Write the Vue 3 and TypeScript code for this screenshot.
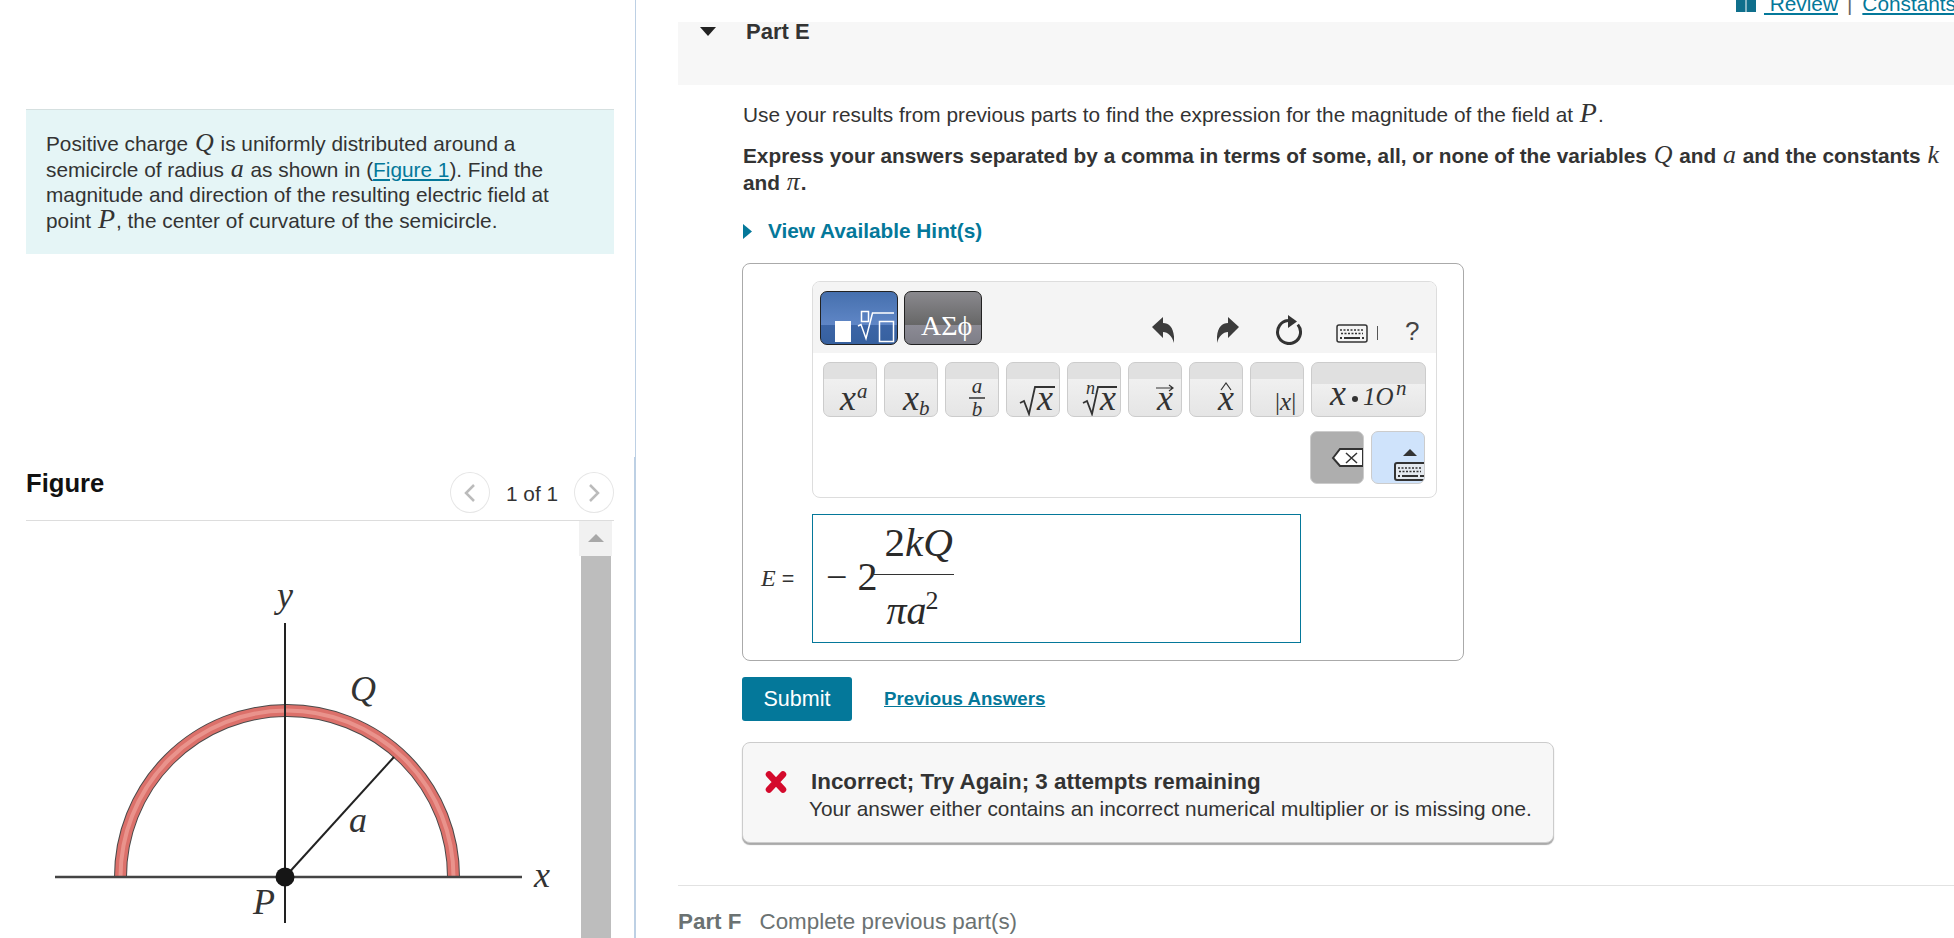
<template>
  <div class="page">
    <aside class="left">
      <span class="splitter"></span>
      <div class="intro">
        Positive charge <i class="m">Q</i> is uniformly distributed around a
        semicircle of radius <i class="m">a</i> as shown in (<a class="link">Figure 1</a>). Find the
        magnitude and direction of the resulting electric field at
        point <i class="m big">P</i>, the center of curvature of the semicircle.
      </div>

      <div class="fig-head">
        <h2>Figure</h2>
        <span class="circle">
          <svg width="12" height="20" viewBox="0 0 12 20"><path d="M10 2 2 10l8 8" /></svg>
        </span>
        <span class="count">1 of 1</span>
        <span class="circle">
          <svg width="12" height="20" viewBox="0 0 12 20"><path d="M2 2l8 8-8 8" /></svg>
        </span>
      </div>

      <div class="fig-body">
        <svg class="diagram" viewBox="26 521 554 417" width="554" height="417">
          <path class="arc a1" d="M120.500 877a166.500 166.500 0 0 1 333 0" />
          <path class="arc a2" d="M120.500 877a166.500 166.500 0 0 1 333 0" />
          <path class="arc a3" d="M120.500 877a166.500 166.500 0 0 1 333 0" />
          <line x1="55" y1="877" x2="522" y2="877" stroke="#444" stroke-width="2.500" />
          <line x1="285" y1="623" x2="285" y2="923" stroke="#222" stroke-width="2" />
          <line x1="285" y1="877" x2="394" y2="757" stroke="#222" stroke-width="2" />
          <circle cx="285" cy="877" r="9.500" fill="#161616" />
          <text x="285" y="607" text-anchor="middle">y</text>
          <text x="363" y="701" text-anchor="middle">Q</text>
          <text x="358" y="832" text-anchor="middle">a</text>
          <text x="542" y="887" text-anchor="middle">x</text>
          <text x="264" y="914" text-anchor="middle">P</text>
        </svg>
        <div class="scroll">
          <div class="scroll-up"><span class="up-tri"></span></div>
          <div class="scroll-thumb"></div>
        </div>
      </div>
    </aside>

    <main class="right">
      <div class="top-links">
        <div class="top-inner">
          <svg class="book" width="20" height="12" viewBox="0 0 20 12">
            <rect width="9.500" height="12" fill="#0f6f8c" />
            <rect x="10.500" width="9.500" height="12" fill="#0f6f8c" />
          </svg>
          <a class="link review">&nbsp;Review</a>
          <span class="sep">|</span>
          <a class="link">Constants</a>
        </div>
      </div>

      <header class="part-head">
        <svg width="16" height="9" viewBox="0 0 16 9"><path d="M0 0h16L8 9z" fill="#222" /></svg>
        <span>Part E</span>
      </header>

      <section class="part-body">
        <p class="q1">Use your results from previous parts to find the expression for the magnitude of the field at <i class="m big">P</i>.</p>
        <p class="q2">
          Express your answers separated by a comma in terms of some, all, or none of the variables
          <i class="m">Q</i> and <i class="m">a</i> and the constants <i class="m">k</i> and <i class="m">π</i>.
        </p>
        <div class="hint">
          <svg width="9" height="15" viewBox="0 0 9 15"><path d="M0 0l9 7.500L0 15z" fill="#04789a" /></svg>
          <a>View Available Hint(s)</a>
        </div>

        <div class="answer">
          <div class="editor">
            <div class="tool-head">
              <div class="tab tab-blue">
                <svg width="78" height="54" viewBox="0 0 78 54" fill="none" stroke="#fff" stroke-width="1.500">
                  <rect x="15" y="30" width="16" height="21" fill="#fff" stroke="none" />
                  <rect x="41.500" y="20.500" width="7" height="10" />
                  <path d="M38 35l3-1.500 5 14L52.500 22H74" />
                  <rect x="59.500" y="30.500" width="14" height="20" />
                </svg>
              </div>
              <div class="tab tab-gray">ΑΣϕ</div>
              <svg class="ti undo" width="22" height="26" viewBox="0 0 22 26"><path d="M0 10 11 0v6c7 0 12 6 11 20-2-7-6-11-11-11v6z" fill="#3c3c3c" /></svg>
              <svg class="ti redo" width="22" height="26" viewBox="0 0 22 26"><path d="M22 10 11 0v6C4 6-1 12 0 26c2-7 6-11 11-11v6z" fill="#3c3c3c" /></svg>
              <svg class="ti reset" width="28" height="30" viewBox="0 0 28 30">
                <path d="M22.800 9.600A11.500 11.500 0 1 1 13 5.600" fill="none" stroke="#333" stroke-width="3" />
                <path d="M13 0l9 6.500-9 6.500z" fill="#333" />
              </svg>
              <svg class="ti kbd" width="32" height="19" viewBox="0 0 32 19">
                <rect x="1" y="1" width="30" height="17" rx="2" fill="#f4f4f4" stroke="#333" stroke-width="1.500" />
                <path d="M4 6h24M5 9.500h22" stroke="#333" stroke-width="1.500" stroke-dasharray="2 1.500" />
                <path d="M4 14h2M8 14h16M26 14h2" stroke="#333" stroke-width="2" />
              </svg>
              <span class="bar"></span>
              <span class="help">?</span>
            </div>

            <div class="keys">
              <div v-for="key in keys" :key="key.id" class="key" :class="{ wide: key.id === 'sci' }">
                <svg :width="key.id === 'sci' ? 115 : 54" height="55" class="key-art">
                  <template v-if="key.id === 'sup'">
                    <text x="17" y="48">x</text><text class="sm" x="34" y="36">a</text>
                  </template>
                  <template v-else-if="key.id === 'sub'">
                    <text x="19" y="48">x</text><text class="sm" x="35" y="53">b</text>
                  </template>
                  <template v-else-if="key.id === 'frac'">
                    <text class="sm" x="32" y="31" text-anchor="middle">a</text>
                    <line x1="24" y1="36" x2="40" y2="36" stroke="#333" stroke-width="1.300" />
                    <text class="sm" x="32" y="54" text-anchor="middle">b</text>
                  </template>
                  <template v-else-if="key.id === 'sqrt'">
                    <path class="rad" d="M14 41l4-2 5 13 6-27h20" />
                    <text x="31" y="48">x</text>
                  </template>
                  <template v-else-if="key.id === 'nroot'">
                    <text class="sm root-n" x="19" y="32">n</text>
                    <path class="rad" d="M16 41l4-2 5 13 6-27h19" />
                    <text x="33" y="48">x</text>
                  </template>
                  <template v-else-if="key.id === 'vec'">
                    <path class="thin" d="M28 26h17m-4-3 4 3-4 3" />
                    <text x="29" y="48">x</text>
                  </template>
                  <template v-else-if="key.id === 'hat'">
                    <path class="thin" d="M32 28l5-7 5 7" />
                    <text x="29" y="48">x</text>
                  </template>
                  <template v-else-if="key.id === 'abs'">
                    <text class="abs" x="25" y="48">|<tspan font-style="italic">x</tspan>|</text>
                  </template>
                  <template v-else>
                    <text x="19" y="43">x</text>
                    <circle cx="44" cy="37" r="3" fill="#333" />
                    <text class="ten" x="52" y="43">1O</text>
                    <text class="sm" x="85" y="33">n</text>
                  </template>
                </svg>
              </div>
            </div>

            <div class="keys-low">
              <div class="key-flat back">
                <svg width="54" height="53" viewBox="0 0 54 53">
                  <path d="M23 27l7-9h23v17H30z" fill="#fff" stroke="#333" stroke-width="2" />
                  <path d="M36 22l11 10m0-10L36 32" stroke="#333" stroke-width="1.500" />
                </svg>
              </div>
              <div class="key-flat kb-toggle">
                <svg width="54" height="53" viewBox="0 0 54 53">
                  <path d="M32 25l7-7 7 7z" fill="#333" />
                  <rect x="24" y="32" width="34" height="17" rx="2" fill="#e4e9ef" stroke="#333" stroke-width="2" />
                  <path d="M27 37h24M28 40.500h22" stroke="#333" stroke-width="1.500" stroke-dasharray="2 1.500" />
                  <path d="M27 45h2M31 45h16M49 45h5" stroke="#333" stroke-width="2" />
                </svg>
              </div>
            </div>
          </div>

          <div class="answer-row">
            <label><i class="e">E</i> =</label>
            <div class="input">
              <span class="minus">−</span>
              <span class="two">2</span>
              <span class="frac">
                <span class="num">2<i>k</i><i>Q</i></span>
                <span class="den"><i>πa</i><sup>2</sup></span>
              </span>
            </div>
          </div>
        </div>

        <div class="actions">
          <button class="submit">Submit</button>
          <a class="prev">Previous Answers</a>
        </div>

        <div class="feedback">
          <svg class="cross" width="24" height="22" viewBox="0 0 24 22">
            <path d="M5 3.500l14 15m0-15L5 18.500" stroke="#d40a2c" stroke-width="6.500" stroke-linecap="round" />
          </svg>
          <div>
            <div class="fb-title">Incorrect; Try Again; 3 attempts remaining</div>
            <div class="fb-text">Your answer either contains an incorrect numerical multiplier or is missing one.</div>
          </div>
        </div>
      </section>

      <footer class="part-next">
        <b>Part F</b><span>Complete previous part(s)</span>
      </footer>
    </main>
  </div>
</template>

<script setup lang="ts">
interface ToolKey {
  id: string
}

const keys: ToolKey[] = [
  { id: 'sup' },
  { id: 'sub' },
  { id: 'frac' },
  { id: 'sqrt' },
  { id: 'nroot' },
  { id: 'vec' },
  { id: 'hat' },
  { id: 'abs' },
  { id: 'sci' }
]
</script>

<style>
html,
body {
  margin: 0;
  background: #fff;
}
</style>

<style scoped>
.page {
  display: flex;
  width: 1954px;
  height: 938px;
  overflow: hidden;
  font-family: "Liberation Sans", Arial, sans-serif;
  font-size: 20.800px;
  color: #333;
}

.m {
  font-family: "Liberation Serif", serif;
  font-style: italic;
  font-weight: 400;
  font-size: 26px;
  line-height: 0;
  margin: 0 1px;
  color: #333;
}

.big {
  font-size: 28px;
}

.link {
  color: #04789a;
  text-decoration: underline;
}

/* left column */
.left {
  position: relative;
  width: 588px;
  padding-left: 26px;
  padding-right: 21px;
  flex: none;
  border-right: 1px solid #bdd0e4;
}

/* drag handle of the pane divider */
.splitter {
  position: absolute;
  top: 457px;
  bottom: 0;
  right: -1px;
  width: 2px;
  background: #bdd0e4;
}

.intro {
  margin-top: 109px;
  padding: 21px 20px;
  height: 102px;
  background: #e5f5f6;
  border-top: 1px solid #d5e0e0;
  line-height: 25.600px;
}

.fig-head {
  display: flex;
  align-items: center;
  margin-top: 213px;
  height: 51px;
  padding-bottom: 2px;
  border-bottom: 1px solid #ddd;
}

.fig-head h2 {
  flex: 1;
  margin: -18px 0 0;
  font-size: 25.600px;
  color: #111;
}

.circle {
  display: flex;
  align-items: center;
  justify-content: center;
  width: 40px;
  height: 41px;
  border: 1px solid #e6e6e6;
  border-radius: 50%;
  box-sizing: border-box;
}

.circle path {
  fill: none;
  stroke: #bbb;
  stroke-width: 2.500;
}

.count {
  width: 84px;
  margin-top: 2px;
  text-align: center;
  color: #333;
}

.fig-body {
  display: flex;
  height: 417px;
}

.diagram {
  flex: none;
  display: block;
  margin-right: -1px;
}

.diagram text {
  font-family: "Liberation Serif", serif;
  font-style: italic;
  font-size: 36px;
  fill: #333;
}

.arc {
  fill: none;
}

.a1 {
  stroke: #4a4a4a;
  stroke-width: 13px;
}

.a2 {
  stroke: #dc706a;
  stroke-width: 11px;
}

.a3 {
  stroke: #e9938c;
  stroke-width: 4;
}

.scroll {
  width: 33px;
  display: flex;
  flex-direction: column;
  align-items: center;
}

.scroll-up {
  width: 100%;
  height: 35px;
  background: #f1f1f1;
  display: flex;
  justify-content: center;
  padding-top: 13px;
  box-sizing: border-box;
}

.up-tri {
  width: 0;
  height: 0;
  border-left: 8px solid transparent;
  border-right: 8px solid transparent;
  border-bottom: 8px solid #a8a8a8;
}

.scroll-thumb {
  width: 30px;
  flex: 1;
  background: #bdbdbd;
}

/* right column */
.right {
  flex: 1;
  min-width: 0;
  padding-left: 42px;
  overflow: hidden;
}

.top-links {
  height: 22px;
  display: flex;
  justify-content: flex-end;
  margin-right: -2px;
}

.top-inner {
  display: flex;
  align-items: flex-start;
  height: 22px;
  margin-top: -9px;
  line-height: 26px;
  white-space: nowrap;
}

.book {
  margin-top: 9px;
}

.review {
  margin-left: 8px;
}

.sep {
  margin: 0 10px 0 9px;
  color: #666;
}

.part-head {
  display: flex;
  align-items: flex-start;
  height: 63px;
  background: #f7f7f7;
  padding-left: 22px;
  box-sizing: border-box;
  font-size: 22px;
  font-weight: 700;
  line-height: 22px;
}

.part-head svg {
  margin-top: 5px;
  margin-right: 30px;
}

.part-head span {
  margin-top: -1px;
}

.part-body {
  padding-left: 64px;
}

.part-body p {
  margin: 0;
  padding-left: 1px;
}

.q1 {
  padding-top: 17px;
  line-height: 26px;
}

.q2 {
  margin-top: 14px !important;
  font-weight: 700;
  line-height: 27px;
}

.hint {
  display: flex;
  align-items: center;
  margin-top: 22px;
  padding-left: 1px;
  color: #04789a;
  font-weight: 700;
  line-height: 26px;
}

.hint a {
  margin-left: 16px;
  font-size: 20.800px;
}

.answer {
  width: 722px;
  box-sizing: border-box;
  margin-top: 19px;
  padding: 17px 26px 17px 69px;
  border: 1px solid #aaa;
  border-radius: 8px;
}

.editor {
  height: 217px;
  box-sizing: border-box;
  border: 1px solid #ddd;
  border-radius: 8px;
  overflow: hidden;
}

.tool-head {
  display: flex;
  align-items: flex-start;
  height: 71px;
  padding: 9px 0 0 7px;
  box-sizing: border-box;
  background: #f4f4f4;
}

.tab {
  width: 78px;
  height: 54px;
  box-sizing: border-box;
  border: 1px solid #222;
  border-radius: 7px;
  overflow: hidden;
}

.tab svg {
  margin: -1px;
  display: block;
}

.tab-blue {
  background: linear-gradient(#4670ae, #5f86c6 63%, #3c65a6 63%, #36609f);
}

.tab-gray {
  margin-left: 6px;
  background: linear-gradient(#8a898e, #676767 63%, #8c8b95 63%, #7e7e87);
  color: #fff;
  font-family: "Liberation Serif", serif;
  font-size: 28px;
  line-height: 28px;
  padding: 20px 0 0 16px;
  white-space: nowrap;
}

.ti {
  flex: none;
  margin-top: 26px;
}

.undo {
  margin-left: 170px;
}

.redo {
  margin-left: 43px;
}

.reset {
  margin-left: 36px;
  margin-top: 24px;
}

.kbd {
  margin-left: 33px;
  margin-top: 33px;
}

.bar {
  width: 1px;
  height: 14px;
  margin: 35px 0 0 9px;
  background: #555;
}

.help {
  margin: 25px 0 0 27px;
  font-size: 26px;
  line-height: 30px;
  color: #444;
}

.keys {
  display: flex;
  gap: 7px;
  margin: 9px 0 0 10px;
}

.key {
  width: 54px;
  height: 55px;
  box-sizing: border-box;
  border: 1px solid #ccc;
  border-radius: 7px;
  overflow: hidden;
  background: linear-gradient(#e0e0e0, #e0e0e0 16px, #f0f0f0 16px, #e5e5e5);
}

.key.wide {
  width: 115px;
  background: linear-gradient(#e0e0e0, #e0e0e0 21px, #f0f0f0 21px, #e5e5e5);
}

.key-art {
  display: block;
  margin: -1px;
}

.key-art text {
  font-family: "Liberation Serif", serif;
  font-style: italic;
  font-size: 36px;
  fill: #333;
}

.key-art .sm {
  font-size: 21px;
}

.key-art .root-n {
  font-size: 18px;
}

.key-art .ten {
  font-size: 25px;
}

.key-art .abs {
  font-size: 25px;
  font-style: normal;
}

.rad {
  fill: none;
  stroke: #333;
  stroke-width: 1.800;
}

.thin {
  fill: none;
  stroke: #333;
  stroke-width: 1.200;
}

.keys-low {
  display: flex;
  justify-content: flex-end;
  gap: 7px;
  margin: 14px 11px 0 0;
}

.key-flat {
  width: 54px;
  height: 53px;
  box-sizing: border-box;
  border: 1px solid #ccc;
  border-radius: 7px;
  overflow: hidden;
}

.key-flat svg {
  display: block;
  margin: -1px;
}

.back {
  background: #aeaeae;
}

.kb-toggle {
  background: #cfe3fb;
}

.answer-row {
  display: flex;
  align-items: center;
  margin-top: 16px;
}

.answer-row label {
  width: 0;
  margin-left: -51px;
  margin-right: 51px;
  white-space: nowrap;
  font-size: 21.500px;
}

.e {
  font-family: "Liberation Serif", serif;
  font-size: 24px;
}

.input {
  display: flex;
  align-items: flex-start;
  width: 489px;
  height: 129px;
  box-sizing: border-box;
  border: 1px solid #04789a;
  padding-left: 13px;
  font-family: "Liberation Serif", serif;
  font-size: 40px;
  line-height: 46px;
  color: #2a2a2a;
}

.minus {
  font-size: 38px;
  margin-top: 39px;
}

.two {
  margin-left: 10px;
  margin-top: 39px;
}

.frac {
  display: flex;
  flex-direction: column;
  align-items: flex-start;
  margin-left: -5px;
  margin-top: 3px;
}

.num,
.den {
  line-height: 48px;
}

.num {
  width: 70px;
  padding-left: 12px;
  padding-bottom: 7.500px;
  border-bottom: 1.500px solid #333;
  font-size: 41px;
}

.den {
  padding-left: 14px;
  padding-top: 12px;
}

.den sup {
  font-size: 26px;
  line-height: 0;
  margin-left: -1px;
  vertical-align: 15px;
}

.actions {
  display: flex;
  align-items: center;
  margin-top: 16px;
}

.submit {
  width: 110px;
  height: 44px;
  border: 0;
  border-radius: 3px;
  background: #04789a;
  color: #fff;
  font: 21.500px "Liberation Sans", Arial, sans-serif;
}

.prev {
  margin-left: 32px;
  color: #04789a;
  font-weight: 700;
  font-size: 18.700px;
  text-decoration: underline;
}

.feedback {
  display: flex;
  width: 812px;
  height: 101px;
  box-sizing: border-box;
  margin-top: 21px;
  padding: 26px 0 0 21px;
  background: #f7f7f7;
  border: 1px solid #ccc;
  border-radius: 8px;
  box-shadow: 0 2px 1px #a9a9a9;
}

.cross {
  flex: none;
  margin-top: 2px;
  margin-right: 23px;
}

.fb-title {
  font-weight: 700;
  font-size: 22.400px;
  line-height: 26px;
}

.fb-text {
  margin-left: -2px;
  line-height: 28px;
}

.part-next {
  margin-top: 42px;
  padding-top: 23px;
  border-top: 1px solid #e2e2e2;
  color: #6b7272;
  font-size: 22.400px;
  line-height: 26px;
}

.part-next span {
  margin-left: 18px;
}
</style>
